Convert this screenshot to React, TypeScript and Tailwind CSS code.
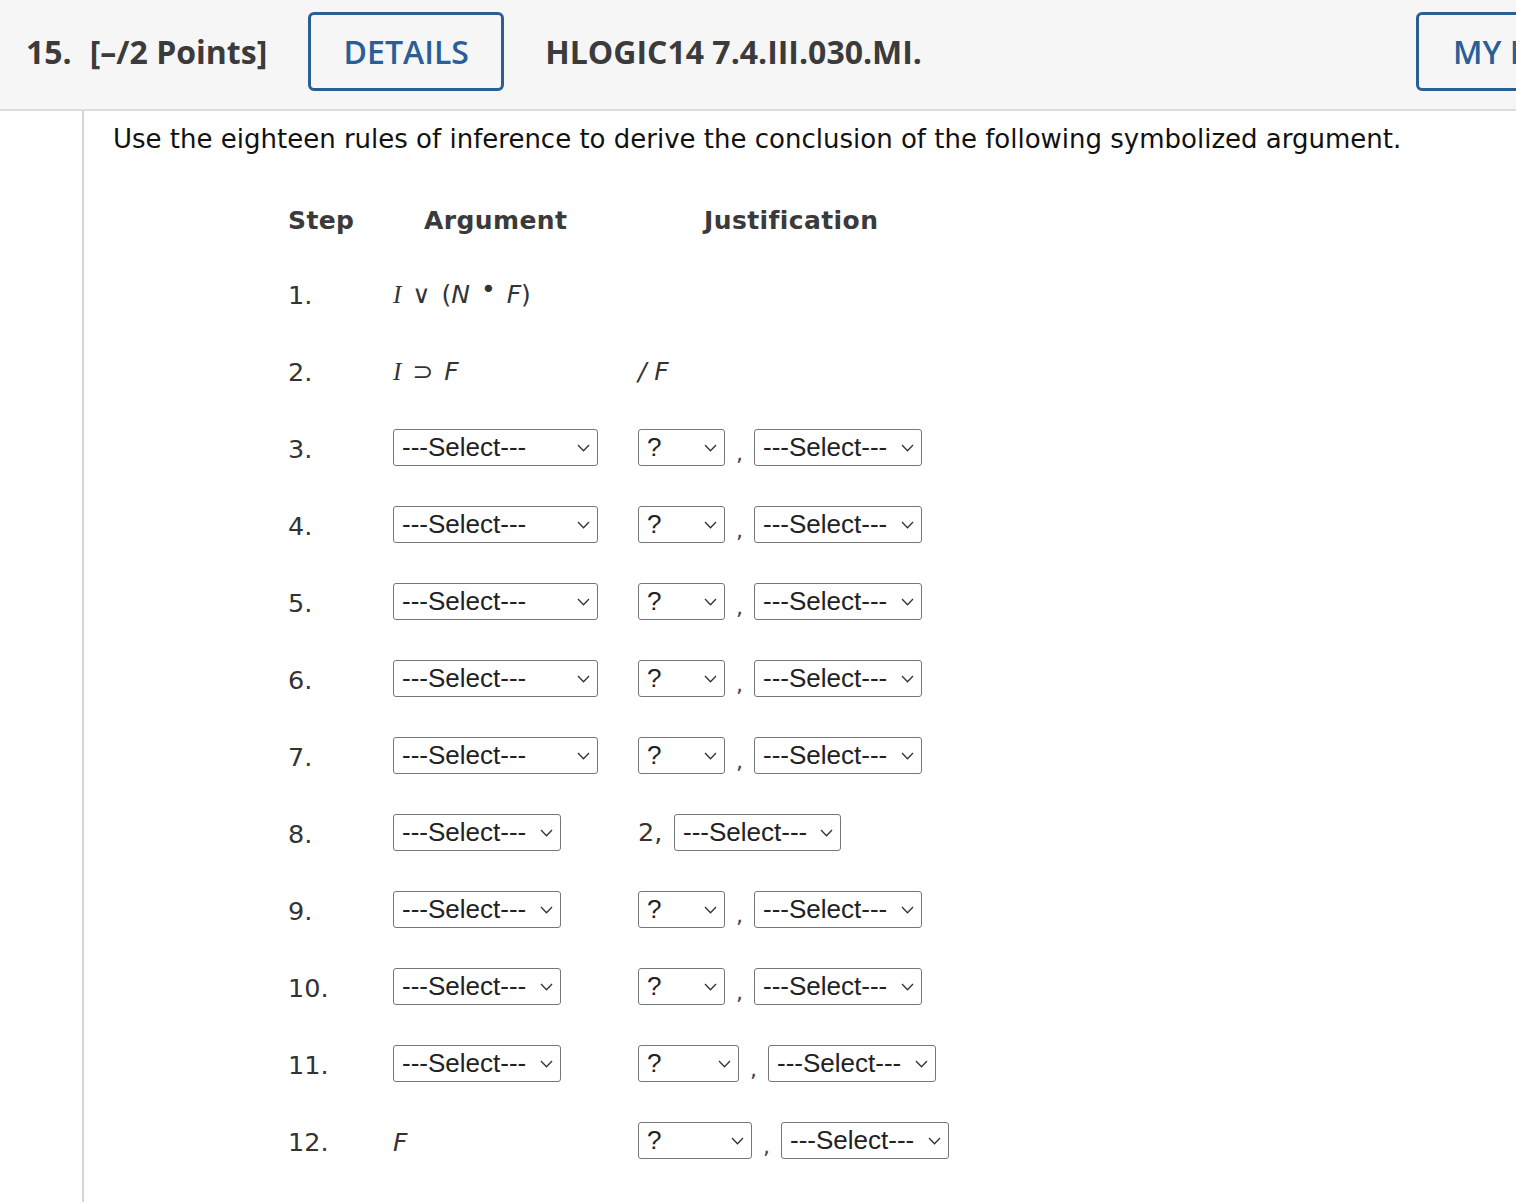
import React from 'react';

const verdana = { fontFamily: '"DejaVu Sans", Verdana, sans-serif' };

function Chevron() {
  return (
    <svg width="13" height="8" viewBox="0 0 13 8" className="shrink-0">
      <path d="M1 1 L6.5 6.8 L12 1" fill="none" stroke="#333" strokeWidth="1.3" />
    </svg>
  );
}

function Dropdown({ label, width }: { label: string; width: number }) {
  return (
    <div
      className="flex h-[37px] items-center justify-between rounded-[3px] border border-[#767676] bg-white pl-[8px] pr-[7px] font-['Liberation_Sans',Arial,sans-serif] text-[26px] leading-none text-[#222]"
      style={{ width }}
    >
      <span className="-mt-[2px]">{label}</span>
      <Chevron />
    </div>
  );
}

type Row =
  | { n: string; arg: React.ReactNode; just?: string }
  | { n: string; argW: number; q?: number; fixed?: string };

const serifI = <span className="font-['Liberation_Serif',serif]">I</span>;

const rows: Row[] = [
  {
    n: '1.',
    arg: (
      <span className="[word-spacing:3px]">
        {serifI} <span className="not-italic">∨</span> <span className="not-italic">(</span>N{' '}
        <span className="relative -top-[5px] not-italic">•</span> F<span className="not-italic">)</span>
      </span>
    ),
  },
  {
    n: '2.',
    arg: (
      <span className="[word-spacing:3px]">
        {serifI} <span className="not-italic">⊃</span> F
      </span>
    ),
    just: '/ F',
  },
  { n: '3.', argW: 205, q: 87 },
  { n: '4.', argW: 205, q: 87 },
  { n: '5.', argW: 205, q: 87 },
  { n: '6.', argW: 205, q: 87 },
  { n: '7.', argW: 205, q: 87 },
  { n: '8.', argW: 168, fixed: '2,' },
  { n: '9.', argW: 168, q: 87 },
  { n: '10.', argW: 168, q: 87 },
  { n: '11.', argW: 168, q: 101 },
  { n: '12.', argW: 0, q: 114 },
];

function Justification({ q }: { q: number }) {
  return (
    <div className="flex items-center">
      <Dropdown label="?" width={q} />
      <span className="w-[29px] pt-[12px] text-center text-[22px] text-[#444]">,</span>
      <Dropdown label="---Select---" width={168} />
    </div>
  );
}

export default function App() {
  return (
    <div className="min-h-[1202px] bg-white text-[#222]" style={verdana}>
      <div className="flex h-[111px] items-start overflow-hidden border-b-2 border-[#dcdcdc] bg-[#f6f6f6] pt-[12px] font-['Open_Sans',sans-serif] font-bold text-[#3b3b3b]">
        <div className="ml-[26px] flex h-[79px] items-center text-[32px]">
          <span>15.</span>
          <span className="ml-[18px]">[–/2 Points]</span>
        </div>
        <div className="ml-[41px] flex h-[79px] w-[196px] items-center justify-center rounded-[6px] border-[3px] border-[#2a5f96] text-[32px] font-semibold text-[#2a5f96]">
          DETAILS
        </div>
        <div className="ml-[41px] flex h-[79px] items-center text-[32px]">HLOGIC14 7.4.III.030.MI.</div>
        <div className="ml-auto mr-[-120px] flex h-[79px] w-[220px] shrink-0 items-center whitespace-nowrap rounded-[6px] border-[3px] border-[#2a5f96] pl-[34px] text-[32px] font-semibold text-[#2a5f96]">
          MY NOTES
        </div>
      </div>
      <div className="ml-[82px] min-h-[1091px] border-l-2 border-[#d4d4d4] pl-[29px]">
        <p className="pt-[12px] text-[26px] leading-[32px] text-[#111]">
          Use the eighteen rules of inference to derive the conclusion of the following symbolized argument.
        </p>
        <div className="ml-[175px] mt-[41px]">
          <div className="flex h-[50px] items-center text-[25px] font-bold tracking-[0.4px] text-[#3a3a3a]">
            <span className="w-[136px]">Step</span>
            <span className="w-[280px]">Argument</span>
            <span>Justification</span>
          </div>
          <div className="pt-[9px]">
            {rows.map((r) => (
              <div key={r.n} className="flex h-[77px] items-center">
                <span className="w-[105px] pt-[4px] text-[25.5px] text-[#333]">{r.n}</span>
                <div className="flex w-[245px] items-center">
                  {'arg' in r ? (
                    <span className="pt-[2px] text-[25px] italic text-[#333]">{r.arg}</span>
                  ) : r.argW ? (
                    <Dropdown label="---Select---" width={r.argW} />
                  ) : (
                    <span className="pt-[4px] text-[25px] italic text-[#333]">F</span>
                  )}
                </div>
                <div className="flex items-center">
                  {'arg' in r ? (
                    r.just && <span className="pt-[2px] text-[25px] italic text-[#333]">{r.just}</span>
                  ) : r.fixed ? (
                    <div className="flex items-center">
                      <span className="w-[36px] text-[25.5px] text-[#333]">{r.fixed}</span>
                      <Dropdown label="---Select---" width={167} />
                    </div>
                  ) : (
                    <Justification q={r.q ?? 87} />
                  )}
                </div>
              </div>
            ))}
          </div>
        </div>
      </div>
    </div>
  );
}
